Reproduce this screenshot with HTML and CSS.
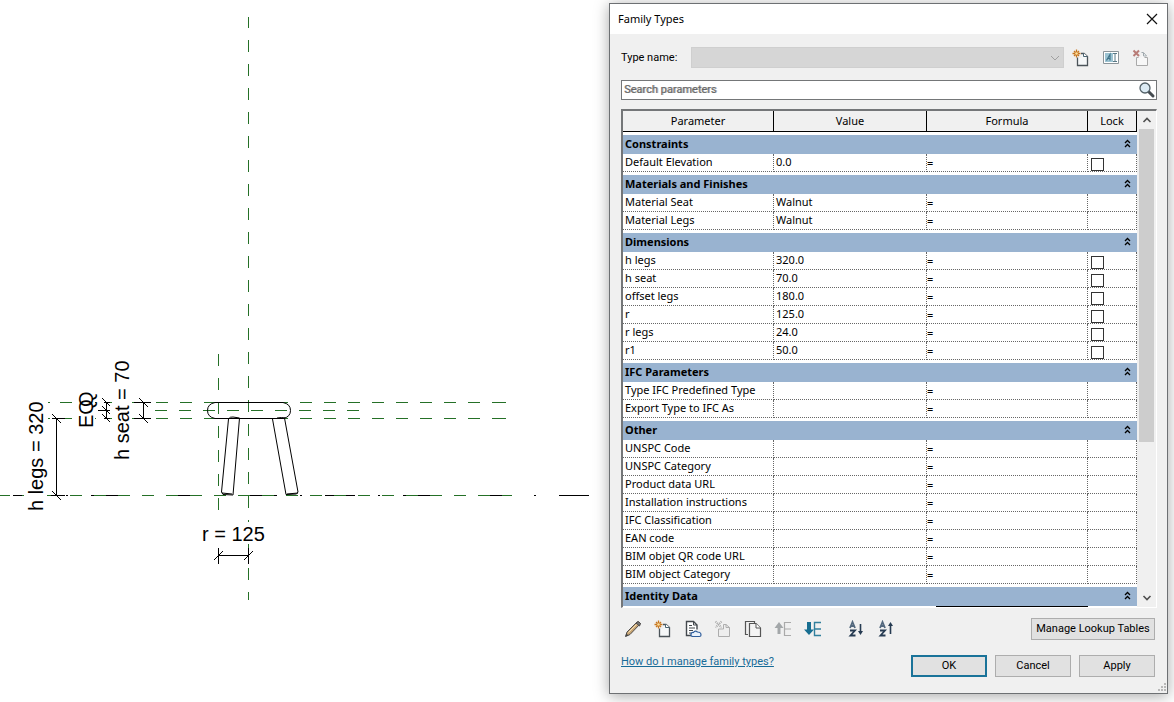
FILE: index.html
```html
<!DOCTYPE html>
<html lang="en">
<head>
<meta charset="utf-8">
<title>Family Types</title>
<link rel="stylesheet" href="styles.css">
</head>
<body>
<main class="workspace">
<svg class="drawing" viewBox="0 0 609 702" role="img" aria-label="Stool elevation">
  <path class="line" d="M13 495.500H590" stroke-dasharray="30 23 2 23"/>
  <g class="plane">
    <path d="M248.500 17V28M48 402.500h2M48 418.500h2M502 402.500h4M502 418.500h4"/>
    <path d="M248.500 40V600M218.500 354V515" class="dash"/>
    <path d="M60 402.500H506M60 418.500H506" class="dash"/>
    <path d="M155 410.500H360" class="dash"/>
    <path d="M-2 495.500H512" class="dash"/>
  </g>
  <path class="mask" d="M24 399h23v113h-23zM75 390h20v38h-20zM112 358h20v103h-20zM200 522h66v22h-66z"/>
  <g class="line">
    <path d="M56.500 418V496M52 418.500H65M51 495.500H65M52 414L61 423M52 491L61 500"/>
    <path d="M143.500 402V419M134 402.500H151M134 418.500H151M139 398L148 407M139 414L148 423"/>
    <path d="M106.500 402V419M104 402.500h6M98 410.500H110M104 418.500h6M102 398L110 406M102 406L110 414M102 414L110 422"/>
    <path d="M218 555.500H249M218.500 548V564M248.500 548V564M214 560L223 551M244 560L253 551"/>
    <path d="M215 402.500H283Q290.500 404 290.500 410.500T283 418.500H215Q207.500 417 207.500 410.500T215 402.500Z"/>
    <path d="M228.500 419L221.500 492L223 494.500L233 495L239.500 418M228.500 419Q230 416.500 233 417L239.500 418M222 493L232 494"/>
    <path d="M272.500 419L286 494.500L296.500 494L298 492L284.500 418M277 418Q282 417 285 418M287 494L298 493"/>
  </g>
  <g class="note">
    <text x="202" y="541">r = 125</text>
    <text transform="translate(43 511) rotate(-90)">h legs = 320</text>
    <text transform="translate(129 460) rotate(-90)">h seat = 70</text>
    <text transform="translate(93 428) rotate(-90)">EQ</text>
    <text transform="translate(93 407) rotate(-90)">Q</text>
  </g>
</svg>

<section class="dialog" role="dialog" aria-labelledby="dialog-title">
  <header class="titlebar">
    <h1 id="dialog-title">Family Types</h1>
    <button class="icon" aria-label="Close"><svg width="12" height="12" viewBox="0 0 12 12"><path d="M1 1L11 11M11 1L1 11" stroke="#111" stroke-width="1.200"/></svg></button>
  </header>
  <div class="content">
    <div class="type-row">
      <label for="type">Type name:</label>
      <div class="select-wrap"><select id="type" disabled><option></option></select><svg width="10" height="6" viewBox="0 0 10 6"><path d="M1 1L5 5L9 1" fill="none" stroke="#a0a0a0"/></svg></div>
      <div class="type-tools">
        <button class="icon" aria-label="New type"><svg width="18" height="18"><use href="#new"/></svg></button>
        <button class="icon" aria-label="Rename type"><svg width="18" height="18" viewBox="0 0 18 18"><path d="M1.500 2.500h15v12h-15z" fill="#fff" stroke="#8b9499"/><path d="M3 4h8v9H3z" fill="#9cc3d2"/><path d="M4.500 11.500L8 5.500V11.500M6 9.500h2" fill="none" stroke="#407489" stroke-width="1.200"/><path d="M11 4.500h4M13 4.500v8M11 12.500h4" stroke="#587986"/></svg></button>
        <button class="icon" aria-label="Delete type" disabled><svg width="18" height="18" viewBox="0 0 18 18"><path d="M4.500 8.500h5v-2h3l3 2v8h-11z" fill="#f7f7f7"/><path d="M4.500 8.500v8h11v-8h-3M4.500 8.500h2" fill="none" stroke="#a9a9a9"/><path d="M9.500 3.500h2l3 3.500h-3V4" fill="#fff" stroke="#9fa8ad"/><path d="M1.500 1.500L7 7M7 1.500L1.500 7" stroke="#b87c77" stroke-width="2"/></svg></button>
      </div>
    </div>
    <div class="search">
      <input type="text" aria-label="Search parameters" placeholder="Search parameters">
      <svg width="18" height="18" viewBox="0 0 18 18"><path d="M10.500 10.500L15 15" stroke="#454b50" stroke-width="3" stroke-linecap="round"/><circle cx="7" cy="7" r="5" fill="#dcebf4" stroke="#536168" stroke-width="1.300"/></svg>
    </div>
    <div class="grid">
      <table>
        <colgroup><col class="c-param"><col class="c-value"><col class="c-formula"><col class="c-lock"></colgroup>
        <thead><tr><th>Parameter</th><th>Value</th><th>Formula</th><th>Lock</th></tr></thead>
        <tbody id="rows"></tbody>
      </table>
      <div class="scrollbar">
        <button class="icon" aria-label="Scroll up"><svg width="10" height="8" viewBox="0 0 10 8"><path d="M1.500 6L5 2.500L8.500 6" fill="none" stroke="#505050" stroke-width="1.600"/></svg></button>
        <div class="track"><div class="thumb"></div></div>
        <button class="icon" aria-label="Scroll down"><svg width="10" height="8" viewBox="0 0 10 8"><path d="M1.500 2L5 5.500L8.500 2" fill="none" stroke="#505050" stroke-width="1.600"/></svg></button>
      </div>
    </div>
    <div class="toolbar">
      <button class="icon" aria-label="Edit parameter"><svg width="18" height="18" viewBox="0 0 18 18"><path d="M1.500 16.500L3 12L13 2Q15 1 16.500 3.500L6 14.500Z" fill="#c9a674" stroke="#4e4b4b"/><path d="M12 3L15.500 6L16.500 3.500Q15 1 13 2Z" fill="#777" stroke="#4e4b4b"/><path d="M4.500 12.500L12.500 4.500" stroke="#f3dfb9"/><path d="M1.500 16.500l1-3 2 2z" fill="#444"/></svg></button>
      <button class="icon" aria-label="New parameter"><svg width="18" height="18"><use href="#new"/></svg></button>
      <button class="icon" aria-label="Shared parameter"><svg width="18" height="18" viewBox="0 0 18 18"><path d="M7 15.500H2.500v-14h7L13 5v4.500" fill="#fff" stroke="#43484d" stroke-width="1.400"/><path d="M9.500 1.500V5H13M5 5.500h3M5 8h6M5 10.500h4M5 13h2" fill="none" stroke="#43484d"/><path d="M8.500 16.500Q6.500 16 7 14T9.500 12.500Q11 10 13.500 12Q17 12 17 15Q17 16.500 15.500 16.500Z" fill="#e9f2fc" stroke="#315f9c" stroke-width="1.200"/></svg></button>
      <button class="icon" aria-label="Delete parameter" disabled><svg width="18" height="18" viewBox="0 0 18 18"><path d="M4.500 9v7.500h11v-9L12 4.500H9.500V9z" fill="#eee" stroke="#adadad"/><path d="M12 4.500v3h3.500" fill="none" stroke="#adadad"/><path d="M1.500 1.500L7.500 7.500M7.500 1.500L1.500 7.500" stroke="#aaa" stroke-width="2" stroke-dasharray="1 1"/></svg></button>
      <button class="icon" aria-label="Duplicate parameter"><svg width="18" height="18" viewBox="0 0 18 18"><path d="M4 14.500H1.500v-13h9V3" fill="none" stroke="#555" stroke-width="1.200"/><path d="M5.500 3.500h6.500l4.500 4.500v8.500h-11z" fill="#f4f4f4" stroke="#555" stroke-width="1.200"/><path d="M12 3.500V8h4.500" fill="#fff" stroke="#555"/></svg></button>
      <button class="icon" aria-label="Move up" disabled><svg width="18" height="18" viewBox="0 0 18 18"><path d="M5 2L0.500 8H3.500v6h3V8H9.500Z" fill="#a3a7a9"/><path d="M17 2.500H10.500v13H17M10.500 9H17" fill="none" stroke="#aaa" stroke-width="1.200"/></svg></button>
      <button class="icon" aria-label="Move down"><svg width="18" height="18" viewBox="0 0 18 18"><path d="M5 15L0 9.500h3V2h4v7.500h3Z" fill="#176e91"/><path d="M17 2.500H10.500v13H17M10.500 9H17" fill="none" stroke="#317f9d" stroke-width="1.400"/></svg></button>
      <button class="icon sort" aria-label="Sort ascending"><svg width="18" height="18" viewBox="0 0 18 18"><use href="#az"/><path d="M13.500 4v9" stroke="#263b52" stroke-width="1.600"/><path d="M11 11h5l-2.500 4z" fill="#263b52"/></svg></button>
      <button class="icon" aria-label="Sort descending"><svg width="18" height="18" viewBox="0 0 18 18"><use href="#az"/><path d="M13.500 5v9" stroke="#263b52" stroke-width="1.600"/><path d="M11 6h5l-2.500-4z" fill="#263b52"/></svg></button>
      <button class="button lookup">Manage Lookup Tables</button>
    </div>
    <footer>
      <a href="#help">How do I manage family types?</a>
      <div class="actions"><button class="button primary">OK</button><button class="button">Cancel</button><button class="button">Apply</button></div>
    </footer>
  </div>
  <svg class="grip" width="10" height="10" viewBox="0 0 10 10" fill="#b8b8b8"><path d="M7 1h2v2H7zM4 4h2v2H4zM7 4h2v2H7zM1 7h2v2H1zM4 7h2v2H4zM7 7h2v2H7z"/></svg>
</section>
</main>
<svg class="symbols" aria-hidden="true">
  <symbol id="new" viewBox="0 0 18 18"><path d="M5.500 9v7.500h10V7.500L12 4.500H9.500V9z" fill="#f5f7f8"/><path d="M5.500 8.500v8h10V7.500L12 4.500H9" fill="none" stroke="#4b5359" stroke-width="1.300"/><path d="M11.500 4v3.500h4" fill="#fff" stroke="#4b6572"/><path d="M4.500 0.500v8M0.500 4.500h8M2 2l5 5M7 2L2 7" stroke="#c77720" stroke-width="1.300"/><circle cx="4.500" cy="4.500" r="1.300" fill="#ffe09b"/></symbol>
  <symbol id="az" viewBox="0 0 18 18"><path d="M3 8L5.500 2L8 8M4 6h3.500" fill="none" stroke="#53687e" stroke-width="1.800"/><path d="M3 10.500h5L3.500 15.500h5" fill="none" stroke="#263b52" stroke-width="1.800"/></symbol>
</svg>
<script src="rows.js"></script>
</body>
</html>
```

FILE: styles.css
```css
* { box-sizing: border-box; }
body { margin: 0; background: #fff; color: #000; font: 11px/16px "Noto Sans", "Open Sans", sans-serif; overflow: hidden; }
button, input, select { font: inherit; color: inherit; }
.workspace { display: grid; grid-template-columns: minmax(0, 609fr) minmax(0, 559fr); align-items: start; padding-right: 6px; min-height: 100vh; }
.drawing { width: 100%; height: auto; display: block; }
.dash { stroke-dasharray: 12 12; }
.plane { fill: none; stroke: #257027; }
.mask { fill: #fff; }
.line { fill: none; stroke: #000; }
.note { font: 20px "Liberation Sans", Arial, sans-serif; }
.symbols { position: absolute; width: 0; height: 0; }

.dialog { position: relative; margin-top: 3px; background: #f0f0f0; border: 1px solid #6d7073; box-shadow: 0 2px 14px rgba(0, 0, 0, .35); }
.titlebar { display: flex; justify-content: space-between; align-items: center; height: 30px; padding: 0 9px 0 8px; background: #fff; }
h1 { margin: 0; font-size: 11px; font-weight: 400; }
.icon { display: flex; align-items: center; justify-content: center; padding: 0; border: 0; background: none; }
.content { padding: 13px 10px 16px 11px; }
.type-row { display: flex; align-items: center; height: 21px; }
.type-row label { width: 70px; }
.type-row label, .search input, .button, footer a { font-family: Roboto, "Open Sans", sans-serif; }
.select-wrap { position: relative; flex: 1; height: 21px; }
.select-wrap select { display: block; width: 100%; height: 100%; appearance: none; border: 1px solid #c2c2c2; border-radius: 0; background: #ccc; }
.select-wrap svg { position: absolute; right: 4px; top: 8px; }
.type-tools { display: flex; gap: 12px; padding: 0 7px 0 8px; }
.search { display: flex; align-items: center; height: 20px; margin: 12px 0 9px; border: 1px solid #747678; background: #fff; }
.search input { flex: 1; min-width: 0; height: 18px; padding: 0 2px 2px; border: 0; background: none; }
.search input::placeholder { color: #666; opacity: 1; text-shadow: 1px 0 #aaa; }

.grid { display: flex; height: 499px; border: 1px solid #fff; border-top: 2px solid #747678; border-left: 2px solid #747678; background: #fff; overflow: hidden; }
table { flex: 1; align-self: flex-start; table-layout: fixed; border-collapse: separate; border-spacing: 0; width: 0; }
.c-param { width: 151px; }
.c-value { width: 153px; }
.c-formula { width: 161px; }
.c-lock { width: 49px; }
th, td { padding: 0; overflow: hidden; white-space: nowrap; }
thead th { height: 21px; background: #f0f0f0; border-right: 1px solid #000; border-bottom: 1px solid #000; font-weight: 400; }
.group th { height: 22px; padding-left: 2px; border-top: 3px solid #fff; background: #99b3d0; text-align: left; }
.group-title { display: flex; justify-content: space-between; align-items: center; padding: 0 5px 2px 0; height: 19px; }
td { height: 18px; padding: 0 0 2px 2px; line-height: 15px; border-right: 1px dotted #666; border-bottom: 1px dotted #666; }
td:nth-child(3) { padding: 0; }
td input { display: block; appearance: none; width: 13px; height: 13px; margin: 3px 0 0 1px; border: 1px solid #333; background: #fff; }
td:nth-child(4) { padding-bottom: 0; }
.editor { width: 152px; height: 2px; margin-left: auto; margin-right: 49px; background: #000; }
.scrollbar { display: flex; flex-direction: column; width: 19px; padding: 0 2px; background: #f0f0f0; }
.scrollbar .icon { height: 18px; }
.track { flex: 1; }
.thumb { height: 68%; background: #cdcdcd; }

.toolbar { display: flex; align-items: center; gap: 12px; margin-top: 10px; padding: 0 2px 0 3px; height: 22px; }
.sort { margin-left: 13px; }
.button { height: 22px; padding: 0; border: 1px solid #adadad; background: #e1e1e1; text-align: center; line-height: 18px; }
.lookup { width: 124px; margin-left: auto; }
footer { display: flex; justify-content: space-between; margin-top: 15px; padding-right: 2px; }
footer a { color: #176b98; line-height: 14px; }
.actions { display: flex; gap: 8px; }
.actions .button { width: 76px; }
.actions .primary { border: 2px solid #1a7399; }
.grip { position: absolute; right: 0; bottom: 1px; }
```

FILE: rows.js
```js
const groups = [
  ["Constraints", [["Default Elevation", "0.0", true]]],
  ["Materials and Finishes", [["Material Seat", "Walnut"], ["Material Legs", "Walnut"]]],
  ["Dimensions", [["h legs", "320.0", true], ["h seat", "70.0", true], ["offset legs", "180.0", true], ["r", "125.0", true], ["r legs", "24.0", true], ["r1", "50.0", true]]],
  ["IFC Parameters", [["Type IFC Predefined Type", ""], ["Export Type to IFC As", ""]]],
  ["Other", [["UNSPC Code", ""], ["UNSPC Category", ""], ["Product data URL", ""], ["Installation instructions", ""], ["IFC Classification", ""], ["EAN code", ""], ["BIM objet QR code URL", ""], ["BIM object Category", ""]]],
  ["Identity Data", []]
];
const chevrons = '<svg width="9" height="9" viewBox="0 0 9 9"><path d="M2 4L4.500 1.500L7 4M2 8L4.500 5.500L7 8" fill="none" stroke="#000" stroke-width="1.300"/></svg>';
document.getElementById("rows").innerHTML = groups.map(([title, rows]) =>
  `<tr class="group"><th colspan="4"><div class="group-title">${title}${chevrons}</div></th></tr>` +
  rows.map(([name, value, lock]) =>
    `<tr><td>${name}</td><td>${value}</td><td>=</td><td>${lock ? `<input type="checkbox" aria-label="Lock ${name}">` : ""}</td></tr>`
  ).join("")
).join("") + '<tr class="next"><th colspan="4"><div class="editor"></div></th></tr>';
```
